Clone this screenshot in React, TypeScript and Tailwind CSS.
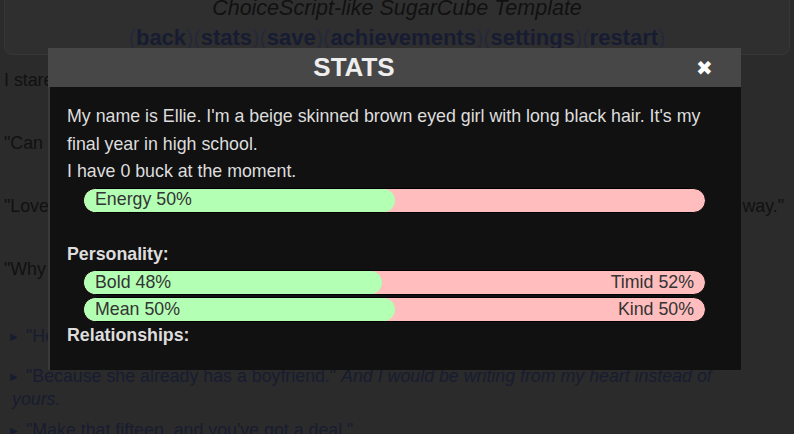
import React from 'react';

const font = { fontFamily: '"Liberation Sans", Arial, sans-serif' };

const Bar = ({ left, right, value }: { left: string; right?: string; value: number }) => (
  <div className="relative h-[25px] rounded-full border border-black bg-[#ffbdbd] overflow-hidden">
    <div className="absolute left-0 top-0 h-full rounded-full bg-[#b3ffb3]" style={{ width: `${value}%` }} />
    <div className="relative flex h-full items-center justify-between px-[11px] text-[17.8px] text-[#333]">
      <span>{left}</span>
      {right && <span>{right}</span>}
    </div>
  </div>
);

const Paren = ({ c }: { c: string }) => <span className="font-normal text-[#25283a]">{c}</span>;

const App = () => {
  return (
    <div className="relative w-[794px] h-[434px] overflow-hidden bg-[#2b2b2b]" style={font}>
      {/* page behind the dialog */}
      <div className="px-1">
        <div className="mt-[-14px] h-[69px] rounded-lg border border-[#363636] bg-[#2f2f2f] text-center">
          <div className="pt-[9px] text-[21.5px] italic leading-[24px] text-[#111]">ChoiceScript-like SugarCube Template</div>
          <div className="mt-[5px] text-[22px] font-bold leading-[26px] text-[#171c33]">
            <Paren c="(" />back<Paren c=")(" />stats<Paren c=")(" />save<Paren c=")(" />achievements<Paren c=")(" />settings<Paren c=")(" />restart<Paren c=")" />
          </div>
        </div>
        <div className="mt-[12px] flex flex-col gap-[36px] text-[17.8px] leading-[27px] text-[#111]">
          <p className="whitespace-nowrap">I stared at the screen for a long time before I finally started to type.</p>
          <p className="whitespace-nowrap">"Can you help me write a letter to him? I don't know where to start."</p>
          <p className="flex justify-between whitespace-nowrap"><span>"Love letters are hard," she said. "But I can try to help you anyway.</span><span className="mr-[6px]">way."</span></p>
          <p className="whitespace-nowrap">"Why don't you just tell him how you feel?"</p>
        </div>
        <div className="mt-[42px] flex flex-col text-[17.8px] leading-[23px] text-[#181c30]">
          <div className="flex items-start gap-[8px] pl-[6px]">
            <span className="text-[10px] leading-[23px]">▶</span>
            <span>"How do I even start?"</span>
          </div>
          <div className="mt-[17px] flex items-start gap-[8px] pl-[6px]">
            <span className="text-[10px] leading-[23px]">▶</span>
            <span className="w-[705px]">"Because she already has a boyfriend." <i>And I would be writing from my heart instead of</i></span>
          </div>
          <div className="pl-[8px] italic">yours.</div>
          <div className="mt-[8px] flex items-start gap-[8px] pl-[6px]">
            <span className="text-[10px] leading-[23px]">▶</span>
            <span>"Make that fifteen, and you've got a deal."</span>
          </div>
        </div>
      </div>

      {/* stats dialog */}
      <div className="absolute left-[48px] top-[48px] w-[693px]">
        <div className="flex h-[39px] items-center bg-[#474747]">
          <span className="flex-1 text-center text-[26px] font-bold text-[#eee]">STATS</span>
          <span className="w-[81px] pl-[8px] text-center text-[20px] leading-[24px] text-white">✖</span>
        </div>
        <div className="h-[283px] border-l-2 border-[#3a3a3a] bg-[#111] pl-[17px] pr-[10px] pt-[16px] text-[17.8px] leading-[27.5px] text-[#ddd]">
          <p>My name is Ellie. I'm a beige skinned brown eyed girl with long black hair. It's my final year in high school.</p>
          <p>I have 0 buck at the moment.</p>
          <div className="mt-[2px] pl-[16px] pr-[25px]">
            <Bar left="Energy 50%" value={50} />
          </div>
          <div className="mt-[28px] font-bold">Personality:</div>
          <div className="mt-[2px] flex flex-col gap-[2px] pl-[16px] pr-[25px]">
            <Bar left="Bold 48%" right="Timid 52%" value={48} />
            <Bar left="Mean 50%" right="Kind 50%" value={50} />
          </div>
          <div className="font-bold">Relationships:</div>
        </div>
      </div>
    </div>
  );
};

export default App;
